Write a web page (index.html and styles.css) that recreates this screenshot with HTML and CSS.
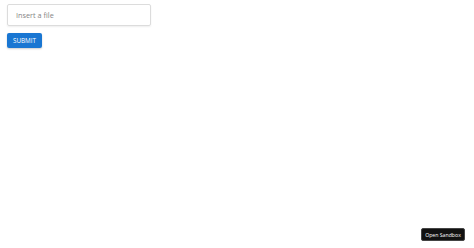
FILE: index.html
```html
<!DOCTYPE html>
<html>
<head>
<meta charset="utf-8">
<link rel="stylesheet" href="styles.css">
</head>
<body>
<form class="form">
  <div class="field"><span class="placeholder">Insert a file</span></div>
  <button type="button" class="submit">SUBMIT</button>
</form>
<a class="sandbox">Open Sandbox</a>
</body>
</html>
```
FILE: styles.css
```css
html, body { margin: 0; padding: 0; background: #fff; }
body {
  font-family: "Open Sans", "Liberation Sans", sans-serif;
  width: 474px; height: 248px; position: relative; overflow: hidden;
}
.form {
  padding: 4px 0 0 7px;
  display: flex; flex-direction: column; align-items: flex-start; gap: 7px;
}
.field {
  box-sizing: border-box;
  width: 144px; height: 22px;
  border: 1px solid #dcdcdc;
  border-radius: 2px;
  box-shadow: 0 1px 2px rgba(0,0,0,0.07);
  display: flex; align-items: center;
  padding-left: 8px;
}
.placeholder { font-size: 7.3px; color: #858585; }
.submit {
  box-sizing: border-box;
  width: 35px; height: 15px;
  background: #1976d2; color: #fff;
  border: none; border-radius: 2px;
  font-family: "Open Sans", "Liberation Sans", sans-serif;
  font-size: 6.3px; font-weight: 400;
  padding: 0;
  box-shadow: 0 1px 2px rgba(0,0,0,0.2);
}
.sandbox {
  position: absolute; left: 421px; top: 228px;
  width: 44px; height: 13px; box-sizing: border-box;
  background: #111; color: #fff;
  border-radius: 2px;
  font-size: 5.2px;
  display: flex; align-items: center; justify-content: center;
  border: 1px solid #444;
}
```
